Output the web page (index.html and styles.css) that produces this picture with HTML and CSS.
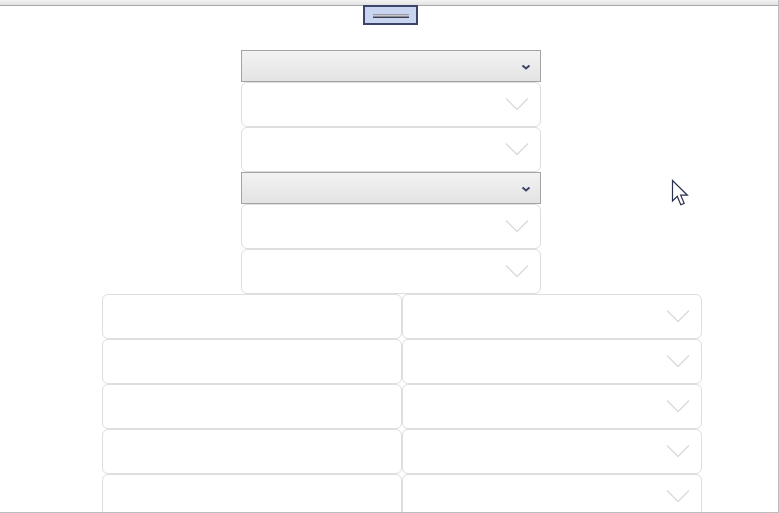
FILE: index.html
```html
<!DOCTYPE html>
<html>
<head>
<meta charset="utf-8">
<link rel="stylesheet" href="styles.css">
</head>
<body>
<div class="frame">
  <div class="topbar"></div>
  <div class="handle-row">
    <div class="handle"><span class="grip"></span></div>
  </div>
  <div class="column">
    <div class="select"><svg class="mini" width="10" height="6" viewBox="0 0 10 6"><path d="M1.5 1.5 L5 4.5 L8.5 1.5" fill="none" stroke="#3c4464" stroke-width="2"/></svg></div>
    <div class="box"><svg class="chev" width="24" height="14" viewBox="0 0 24 14"><path d="M1 1.5 L12 12.5 L23 1.5" fill="none" stroke="#dcdcdc" stroke-width="1.5"/></svg></div>
    <div class="box"><svg class="chev" width="24" height="14" viewBox="0 0 24 14"><path d="M1 1.5 L12 12.5 L23 1.5" fill="none" stroke="#dcdcdc" stroke-width="1.5"/></svg></div>
    <div class="select"><svg class="mini" width="10" height="6" viewBox="0 0 10 6"><path d="M1.5 1.5 L5 4.5 L8.5 1.5" fill="none" stroke="#3c4464" stroke-width="2"/></svg></div>
    <div class="box"><svg class="chev" width="24" height="14" viewBox="0 0 24 14"><path d="M1 1.5 L12 12.5 L23 1.5" fill="none" stroke="#dcdcdc" stroke-width="1.5"/></svg></div>
    <div class="box"><svg class="chev" width="24" height="14" viewBox="0 0 24 14"><path d="M1 1.5 L12 12.5 L23 1.5" fill="none" stroke="#dcdcdc" stroke-width="1.5"/></svg></div>
  </div>
  <div class="grid">
    <div class="box"></div>
    <div class="box"><svg class="chev" width="24" height="14" viewBox="0 0 24 14"><path d="M1 1.5 L12 12.5 L23 1.5" fill="none" stroke="#dcdcdc" stroke-width="1.5"/></svg></div>
    <div class="box"></div>
    <div class="box"><svg class="chev" width="24" height="14" viewBox="0 0 24 14"><path d="M1 1.5 L12 12.5 L23 1.5" fill="none" stroke="#dcdcdc" stroke-width="1.5"/></svg></div>
    <div class="box"></div>
    <div class="box"><svg class="chev" width="24" height="14" viewBox="0 0 24 14"><path d="M1 1.5 L12 12.5 L23 1.5" fill="none" stroke="#dcdcdc" stroke-width="1.5"/></svg></div>
    <div class="box"></div>
    <div class="box"><svg class="chev" width="24" height="14" viewBox="0 0 24 14"><path d="M1 1.5 L12 12.5 L23 1.5" fill="none" stroke="#dcdcdc" stroke-width="1.5"/></svg></div>
    <div class="box"></div>
    <div class="box"><svg class="chev" width="24" height="14" viewBox="0 0 24 14"><path d="M1 1.5 L12 12.5 L23 1.5" fill="none" stroke="#dcdcdc" stroke-width="1.5"/></svg></div>
  </div>
  <svg class="cursor" width="22" height="30" viewBox="0 0 22 30"><path d="M1.5 1.5 L1.5 22 L6.3 17.4 L9.8 25.8 L13.2 24.4 L9.7 16.2 L16.4 16.2 Z" fill="#fff" stroke="#2b3150" stroke-width="1.2" stroke-linejoin="miter"/></svg>
</div>
</body>
</html>
```

FILE: styles.css
```css
html, body {
  margin: 0;
  padding: 0;
  background: #ffffff;
  font-family: "Liberation Sans", Arial, sans-serif;
}

.frame {
  position: relative;
  width: 778px;
  height: 512px;
  border-right: 1px solid #bdbdbd;
  border-bottom: 1px solid #bdbdbd;
  overflow: hidden;
  background: #ffffff;
}

.topbar {
  height: 5px;
  background: linear-gradient(#f3f3f3, #e2e2e2);
  border-bottom: 1px solid #a9a9a9;
}

.handle-row {
  display: flex;
  margin-top: -1px;
  padding-left: 363px;
}

.handle {
  box-sizing: border-box;
  width: 55px;
  height: 20px;
  border: 2px solid #3c4469;
  background: #c8d4f0;
  display: flex;
  align-items: center;
  justify-content: center;
}

.grip {
  display: block;
  width: 36px;
  height: 4px;
  margin-top: 1px;
  background: linear-gradient(#9a9ca8 0, #9a9ca8 1px, #c4c6cc 1px, #c4c6cc 2px, #8a8c98 2px, #8a8c98 3px, #3c3f4e 3px);
}

.column {
  display: flex;
  flex-direction: column;
  width: 300px;
  margin-left: 241px;
  margin-top: 25px;
}

.select {
  box-sizing: border-box;
  height: 32px;
  border: 1px solid #a3a3a3;
  background: linear-gradient(#f2f2f2, #e3e3e3);
  display: flex;
  align-items: center;
  justify-content: flex-end;
  padding-right: 9px;
}

.mini {
  display: block;
  margin-top: 1px;
}

.box {
  box-sizing: border-box;
  height: 45px;
  border: 1px solid #dedede;
  border-radius: 6px;
  background: #ffffff;
  display: flex;
  align-items: center;
  justify-content: flex-end;
  padding-right: 11px;
}

.chev {
  display: block;
  margin-top: -1px;
}

.grid {
  display: grid;
  grid-template-columns: 300px 300px;
  width: 600px;
  margin-left: 102px;
}

.cursor {
  position: absolute;
  left: 671px;
  top: 179px;
}
```
